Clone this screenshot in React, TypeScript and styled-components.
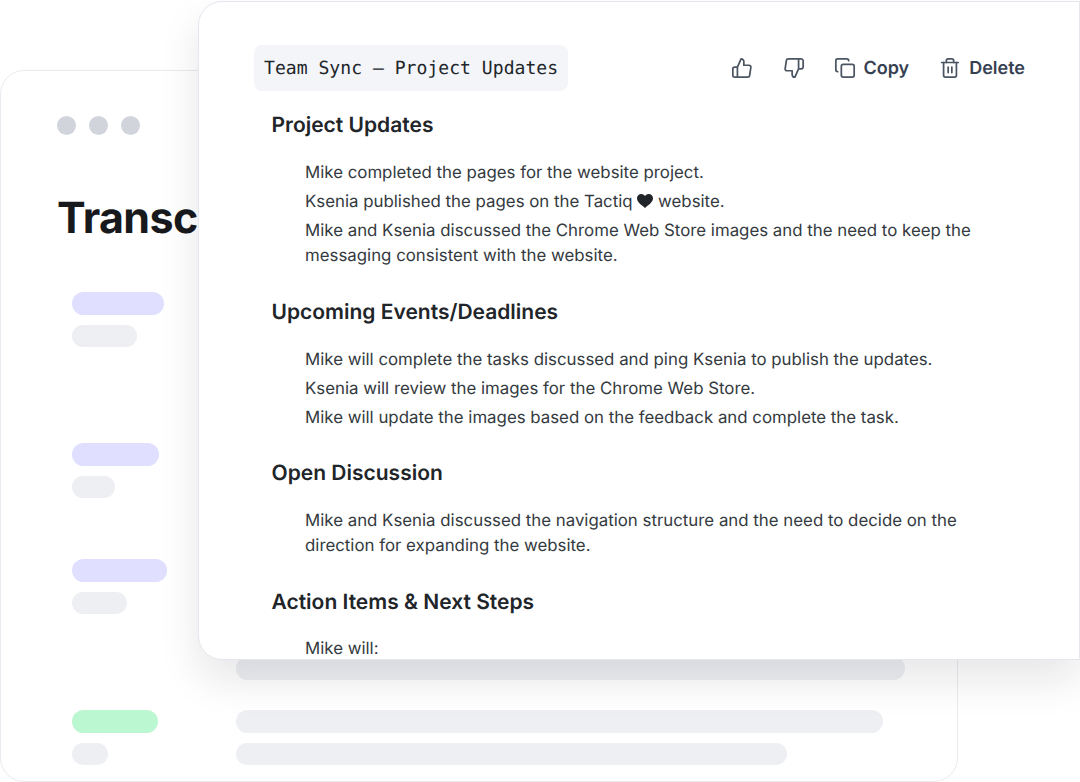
import React from "react";
import styled, { createGlobalStyle } from "styled-components";
import { Copy, Trash2 } from "lucide-react";
import { FiThumbsUp, FiThumbsDown } from "react-icons/fi";

const Global = createGlobalStyle`
  html, body { margin: 0; padding: 0; background: #fff; }
  body { font-family: Inter, "Liberation Sans", sans-serif; text-rendering: geometricPrecision; }
`;

const Stage = styled.div`
  position: relative;
  width: 1080px;
  height: 782px;
  overflow: hidden;
  background: #fff;
`;

const BackWindow = styled.section`
  position: absolute;
  left: 0;
  top: 70px;
  width: 958px;
  height: 712px;
  box-sizing: border-box;
  border: 1.5px solid #e9ebf0;
  border-radius: 24px;
  background: #fff;
  padding: 45px 0 0 56px;
  overflow: hidden;
`;

const Dots = styled.div`
  display: flex;
  gap: 13px;
`;

const Dot = styled.span`
  width: 19px;
  height: 19px;
  border-radius: 50%;
  background: #d1d5db;
`;

const BigTitle = styled.h1`
  margin: 53px 0 0 0;
  font-size: 43px;
  line-height: 60px;
  font-weight: 700;
  color: #18191c;
  letter-spacing: -0.6px;
`;

const Rows = styled.div`
  margin: 44px 0 0 15px;
  display: flex;
  flex-direction: column;
`;

const Row = styled.div<{ $h: number }>`
  display: flex;
  gap: 72px;
  height: ${(p) => p.$h}px;
`;

const Labels = styled.div`
  width: 92px;
  display: flex;
  flex-direction: column;
  gap: 10px;
  flex: none;
`;

const Lines = styled.div<{ $top: number }>`
  display: flex;
  flex-direction: column;
  gap: 10px;
  margin-top: ${(p) => p.$top}px;
`;

const Bar = styled.div<{ $w: number; $tone?: "purple" | "green" | "grey" }>`
  width: ${(p) => p.$w}px;
  height: 22.5px;
  border-radius: 12px;
  background: ${(p) =>
    p.$tone === "purple" ? "#e0dfff" : p.$tone === "green" ? "#bbf7d0" : "#eeeff2"};
  flex: none;
`;

const FrontWindow = styled.section`
  position: absolute;
  left: 198px;
  top: 1px;
  width: 882px;
  height: 659px;
  box-sizing: border-box;
  border: 1.5px solid #e5e7ee;
  border-radius: 24px 0 0 24px;
  background: #fff;
  box-shadow: 0 20px 40px rgba(17, 24, 39, 0.1);
  overflow: hidden;
  padding: 43px 0 0 55px;
`;

const Toolbar = styled.header`
  display: flex;
  align-items: center;
  height: 46px;
`;

const TitleChip = styled.div`
  height: 46px;
  box-sizing: border-box;
  padding: 0 10px;
  display: flex;
  align-items: center;
  border-radius: 8px;
  background: #f3f5f9;
  font-family: "DejaVu Sans Mono", "Liberation Mono", monospace;
  font-size: 18.1px;
  color: #212529;
  white-space: nowrap;
`;

const Actions = styled.div`
  margin-left: auto;
  margin-right: 54px;
  display: flex;
  align-items: center;
  color: #4b5563;
`;

const IconButton = styled.span`
  display: flex;
  width: 22px;
  height: 22px;
  margin-right: 30px;
`;

const TextButton = styled.span<{ $gap: number }>`
  display: flex;
  align-items: center;
  gap: ${(p) => p.$gap}px;
  font-size: 18px;
  font-weight: 600;
  color: #374151;
  margin-left: -1px;
  margin-right: 31px;
  &:last-child { margin-right: 0; }
  svg { color: #4b5563; }
`;

const ButtonLabel = styled.span`
  padding-top: 1px;
`;

const Doc = styled.article`
  padding: 0 0 0 17.5px;
  color: #212529;
`;

const Heading = styled.h2<{ $top: number }>`
  margin: ${(p) => p.$top}px 0 0;
  font-size: 21px;
  line-height: 32px;
  font-weight: 600;
  color: #212529;
`;

const Para = styled.p`
  margin: 0;
  width: 680px;
  padding-left: 33.5px;
  font-size: 16.83px;
  line-height: 25px;
  margin-bottom: 4.2px;
  color: #343a40;
`;

const Block = styled.div`
  margin-top: 18.6px;
`;

const Heart = styled.svg`
  display: inline-block;
  vertical-align: -1px;
  width: 16px;
  height: 14px;
`;

const rows = [
  { h: 151, a: 92, b: 65, top: 0, lines: [] as number[], tone: "purple" as const },
  { h: 116, a: 87, b: 43, top: 0, lines: [], tone: "purple" as const },
  { h: 151, a: 95, b: 55, top: 98, lines: [669], tone: "purple" as const },
  { h: 60, a: 86, b: 36, top: 0, lines: [647, 551], tone: "green" as const },
];

export default function App() {
  return (
    <Stage>
      <Global />
      <BackWindow>
        <Dots>
          <Dot />
          <Dot />
          <Dot />
        </Dots>
        <BigTitle>Transcript</BigTitle>
        <Rows>
          {rows.map((r, i) => (
            <Row key={i} $h={r.h}>
              <Labels>
                <Bar $w={r.a} $tone={r.tone} />
                <Bar $w={r.b} />
              </Labels>
              <Lines $top={r.top}>
                {r.lines.map((w, j) => (
                  <Bar key={j} $w={w} />
                ))}
              </Lines>
            </Row>
          ))}
        </Rows>
      </BackWindow>
      <FrontWindow>
        <Toolbar>
          <TitleChip>Team Sync – Project Updates</TitleChip>
          <Actions>
            <IconButton>
              <FiThumbsUp size={22} strokeWidth={1.9} />
            </IconButton>
            <IconButton>
              <FiThumbsDown size={22} strokeWidth={1.9} />
            </IconButton>
            <TextButton $gap={7}>
              <Copy size={22} strokeWidth={1.9} />
              <ButtonLabel>Copy</ButtonLabel>
            </TextButton>
            <TextButton $gap={8}>
              <Trash2 size={22} strokeWidth={1.9} />
              <ButtonLabel>Delete</ButtonLabel>
            </TextButton>
          </Actions>
        </Toolbar>
        <Doc>
          <Heading $top={19}>Project Updates</Heading>
          <Block>
            <Para>Mike completed the pages for the website project.</Para>
            <Para>
              Ksenia published the pages on the Tactiq{" "}
              <Heart viewBox="0 0 24 21">
                <path
                  fill="#212529"
                  d="M12 21C5 15.5 0 11.500 0 6.500 0 2.800 2.800 0 6.400 0 8.600 0 10.800 1.100 12 3 13.200 1.100 15.400 0 17.600 0 21.200 0 24 2.800 24 6.500 24 11.500 19 15.500 12 21Z"
                />
              </Heart>{" "}
              website.
            </Para>
            <Para>
              Mike and Ksenia discussed the Chrome Web Store images and the need to keep the
              messaging consistent with the website.
            </Para>
          </Block>
          <Heading $top={28}>Upcoming Events/Deadlines</Heading>
          <Block>
            <Para>Mike will complete the tasks discussed and ping Ksenia to publish the updates.</Para>
            <Para>Ksenia will review the images for the Chrome Web Store.</Para>
            <Para>Mike will update the images based on the feedback and complete the task.</Para>
          </Block>
          <Heading $top={27.5}>Open Discussion</Heading>
          <Block>
            <Para>
              Mike and Ksenia discussed the navigation structure and the need to decide on the
              direction for expanding the website.
            </Para>
          </Block>
          <Heading $top={27.6}>Action Items &amp; Next Steps</Heading>
          <Block>
            <Para>Mike will:</Para>
          </Block>
        </Doc>
      </FrontWindow>
    </Stage>
  );
}
